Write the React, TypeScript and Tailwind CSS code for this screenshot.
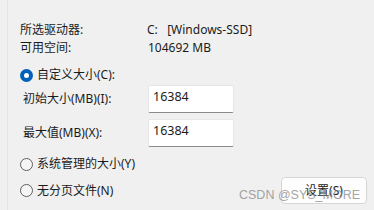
import React from "react";

const FONT = { fontFamily: '"Segoe UI", "Noto Sans", "Noto Sans CJK SC", sans-serif' };

function Radio({ checked, label }: { checked?: boolean; label: string }) {
  return (
    <div className="flex items-center gap-[4px] h-[18px]">
      {checked ? (
        <span className="w-[13px] h-[13px] rounded-full bg-[#005fb8] flex items-center justify-center">
          <span className="w-[5px] h-[5px] rounded-full bg-white" />
        </span>
      ) : (
        <span className="w-[13px] h-[13px] rounded-full border border-[#5f5f5f] bg-[#f5f5f5]" />
      )}
      <span>{label}</span>
    </div>
  );
}

function SizeInput({ label, value }: { label: string; value: string }) {
  return (
    <div className="flex items-center h-[28px]">
      <span className="w-[128px] pl-[3px]">{label}</span>
      <div className="w-[86px] h-[28px] bg-white border border-[#e6e6e6] border-b-[#8a8a8a] rounded-[2px] pl-[4px] pt-[2px] text-[12.5px]">
        {value}
      </div>
    </div>
  );
}

export default function App() {
  return (
    <div className="relative w-[374px] h-[210px] bg-[#f0f0f0] text-[12px] text-[#1b1b1b] flex overflow-hidden" style={FONT}>
      <div className="w-[7px]" />
      <div className="w-px bg-[#e4e4e4]" />
      <div className="flex-1 flex flex-col pl-[12px] pt-[21px] pr-[7px]">
        <div className="flex items-center h-[18px]">
          <span className="w-[127px]">所选驱动器:</span>
          <span>C:&nbsp;&nbsp;&nbsp;[Windows-SSD]</span>
        </div>
        <div className="flex items-center h-[18px]">
          <span className="w-[128px]">可用空间:</span>
          <span>104692 MB</span>
        </div>
        <div className="mt-[9px]">
          <Radio checked label="自定义大小(C):" />
        </div>
        <div className="mt-[1px]">
          <SizeInput label="初始大小(MB)(I):" value="16384" />
        </div>
        <div className="mt-[6px]">
          <SizeInput label="最大值(MB)(X):" value="16384" />
        </div>
        <div className="mt-[8px]">
          <Radio label="系统管理的大小(Y)" />
        </div>
        <div className="mt-[4px] flex items-center justify-between h-[27px]">
          <Radio label="无分页文件(N)" />
          <button className="w-[86px] h-[27px] rounded-[4px] border border-[#d6d6d6] bg-[#fdfdfd] text-[12px]">
            设置(S)
          </button>
        </div>
      </div>
      <span
        className="absolute left-[239px] top-[186px] text-[12.5px] text-[#8c8c8c]/80 whitespace-nowrap"
        style={{ fontFamily: '"Liberation Sans", Arial, sans-serif' }}
      >
        CSDN @SYS_MORE
      </span>
    </div>
  );
}
